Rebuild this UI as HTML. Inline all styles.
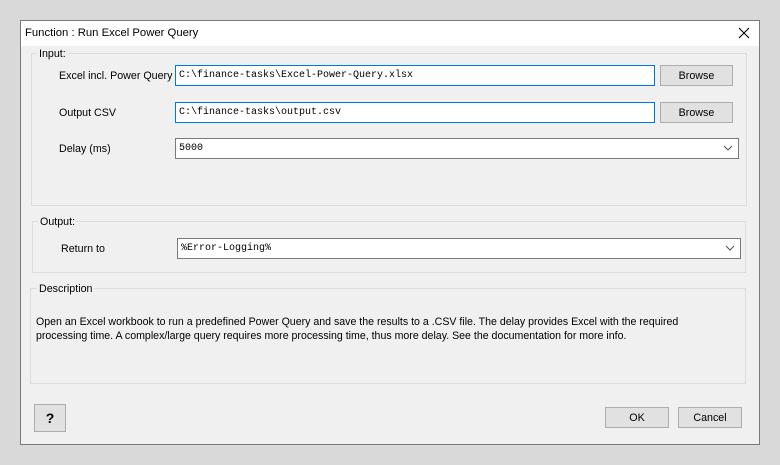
<!DOCTYPE html>
<html><head><style>
*{margin:0;padding:0;box-sizing:border-box}
body{width:780px;height:465px;background:#d9d9d9;font-family:"Liberation Sans",sans-serif;font-size:10.7px;color:#000;position:relative;overflow:hidden}
.a{position:absolute;white-space:nowrap}
.win{left:20px;top:20px;width:740px;height:425px;background:#f0f0f0;border:1px solid #7a7a7a}
.title{left:21px;top:21px;width:738px;height:25px;background:#fff}
.grp{border:1px solid #dcdcdc}
.leg{background:#f0f0f0;padding:0 2px}
.tb{background:#fff;border:1px solid #0078d7;height:21px;font-family:"Liberation Mono",monospace;font-size:10px;padding:4px 0 0 3px}
.cb{background:#fff;border:1px solid #7a7a7a;height:21px;font-family:"Liberation Mono",monospace;font-size:10px;padding:4px 0 0 3px}
.btn{background:#e1e1e1;border:1px solid #adadad;text-align:center;line-height:20px}
.chev{position:absolute;right:5px;top:4px}
</style></head><body>
<div class="a win"></div>
<div class="a title"></div>
<div class="a" style="left:25px;top:27px;font-size:11.3px">Function : Run Excel Power Query</div>
<svg class="a" style="left:738px;top:27px" width="12" height="12"><path d="M1 1L11 11M11 1L1 11" stroke="#000" stroke-width="1.1"/></svg>

<div class="a grp" style="left:31px;top:53px;width:716px;height:153px"></div>
<div class="a leg" style="left:37px;top:48px">Input:</div>
<div class="a" style="left:59px;top:70px">Excel incl. Power Query</div>
<div class="a tb" style="left:175px;top:65px;width:480px">C:\finance-tasks\Excel-Power-Query.xlsx</div>
<div class="a btn" style="left:660px;top:65px;width:73px;height:21px">Browse</div>
<div class="a" style="left:59px;top:107px">Output CSV</div>
<div class="a tb" style="left:175px;top:102px;width:480px">C:\finance-tasks\output.csv</div>
<div class="a btn" style="left:660px;top:102px;width:73px;height:21px">Browse</div>
<div class="a" style="left:59px;top:143px">Delay (ms)</div>
<div class="a cb" style="left:175px;top:138px;width:564px">5000<svg class="chev" width="10" height="10"><path d="M1 3L5 7L9 3" stroke="#555" fill="none"/></svg></div>

<div class="a grp" style="left:32px;top:221px;width:714px;height:52px"></div>
<div class="a leg" style="left:38px;top:216px">Output:</div>
<div class="a" style="left:61px;top:243px">Return to</div>
<div class="a cb" style="left:177px;top:238px;width:564px">%Error-Logging%<svg class="chev" width="10" height="10"><path d="M1 3L5 7L9 3" stroke="#555" fill="none"/></svg></div>

<div class="a grp" style="left:30px;top:288px;width:716px;height:96px"></div>
<div class="a leg" style="left:37px;top:283px">Description</div>
<div class="a" style="left:36px;top:315px;line-height:14px;font-size:10.6px">Open an Excel workbook to run a predefined Power Query and save the results to a .CSV file. The delay provides Excel with the required<br>processing time. A complex/large query requires more processing time, thus more delay. See the documentation for more info.</div>

<div class="a btn" style="left:34px;top:404px;width:32px;height:28px;line-height:26px;font-weight:bold;font-size:14px">?</div>
<div class="a btn" style="left:605px;top:407px;width:64px;height:21px">OK</div>
<div class="a btn" style="left:678px;top:407px;width:64px;height:21px">Cancel</div>
</body></html>
